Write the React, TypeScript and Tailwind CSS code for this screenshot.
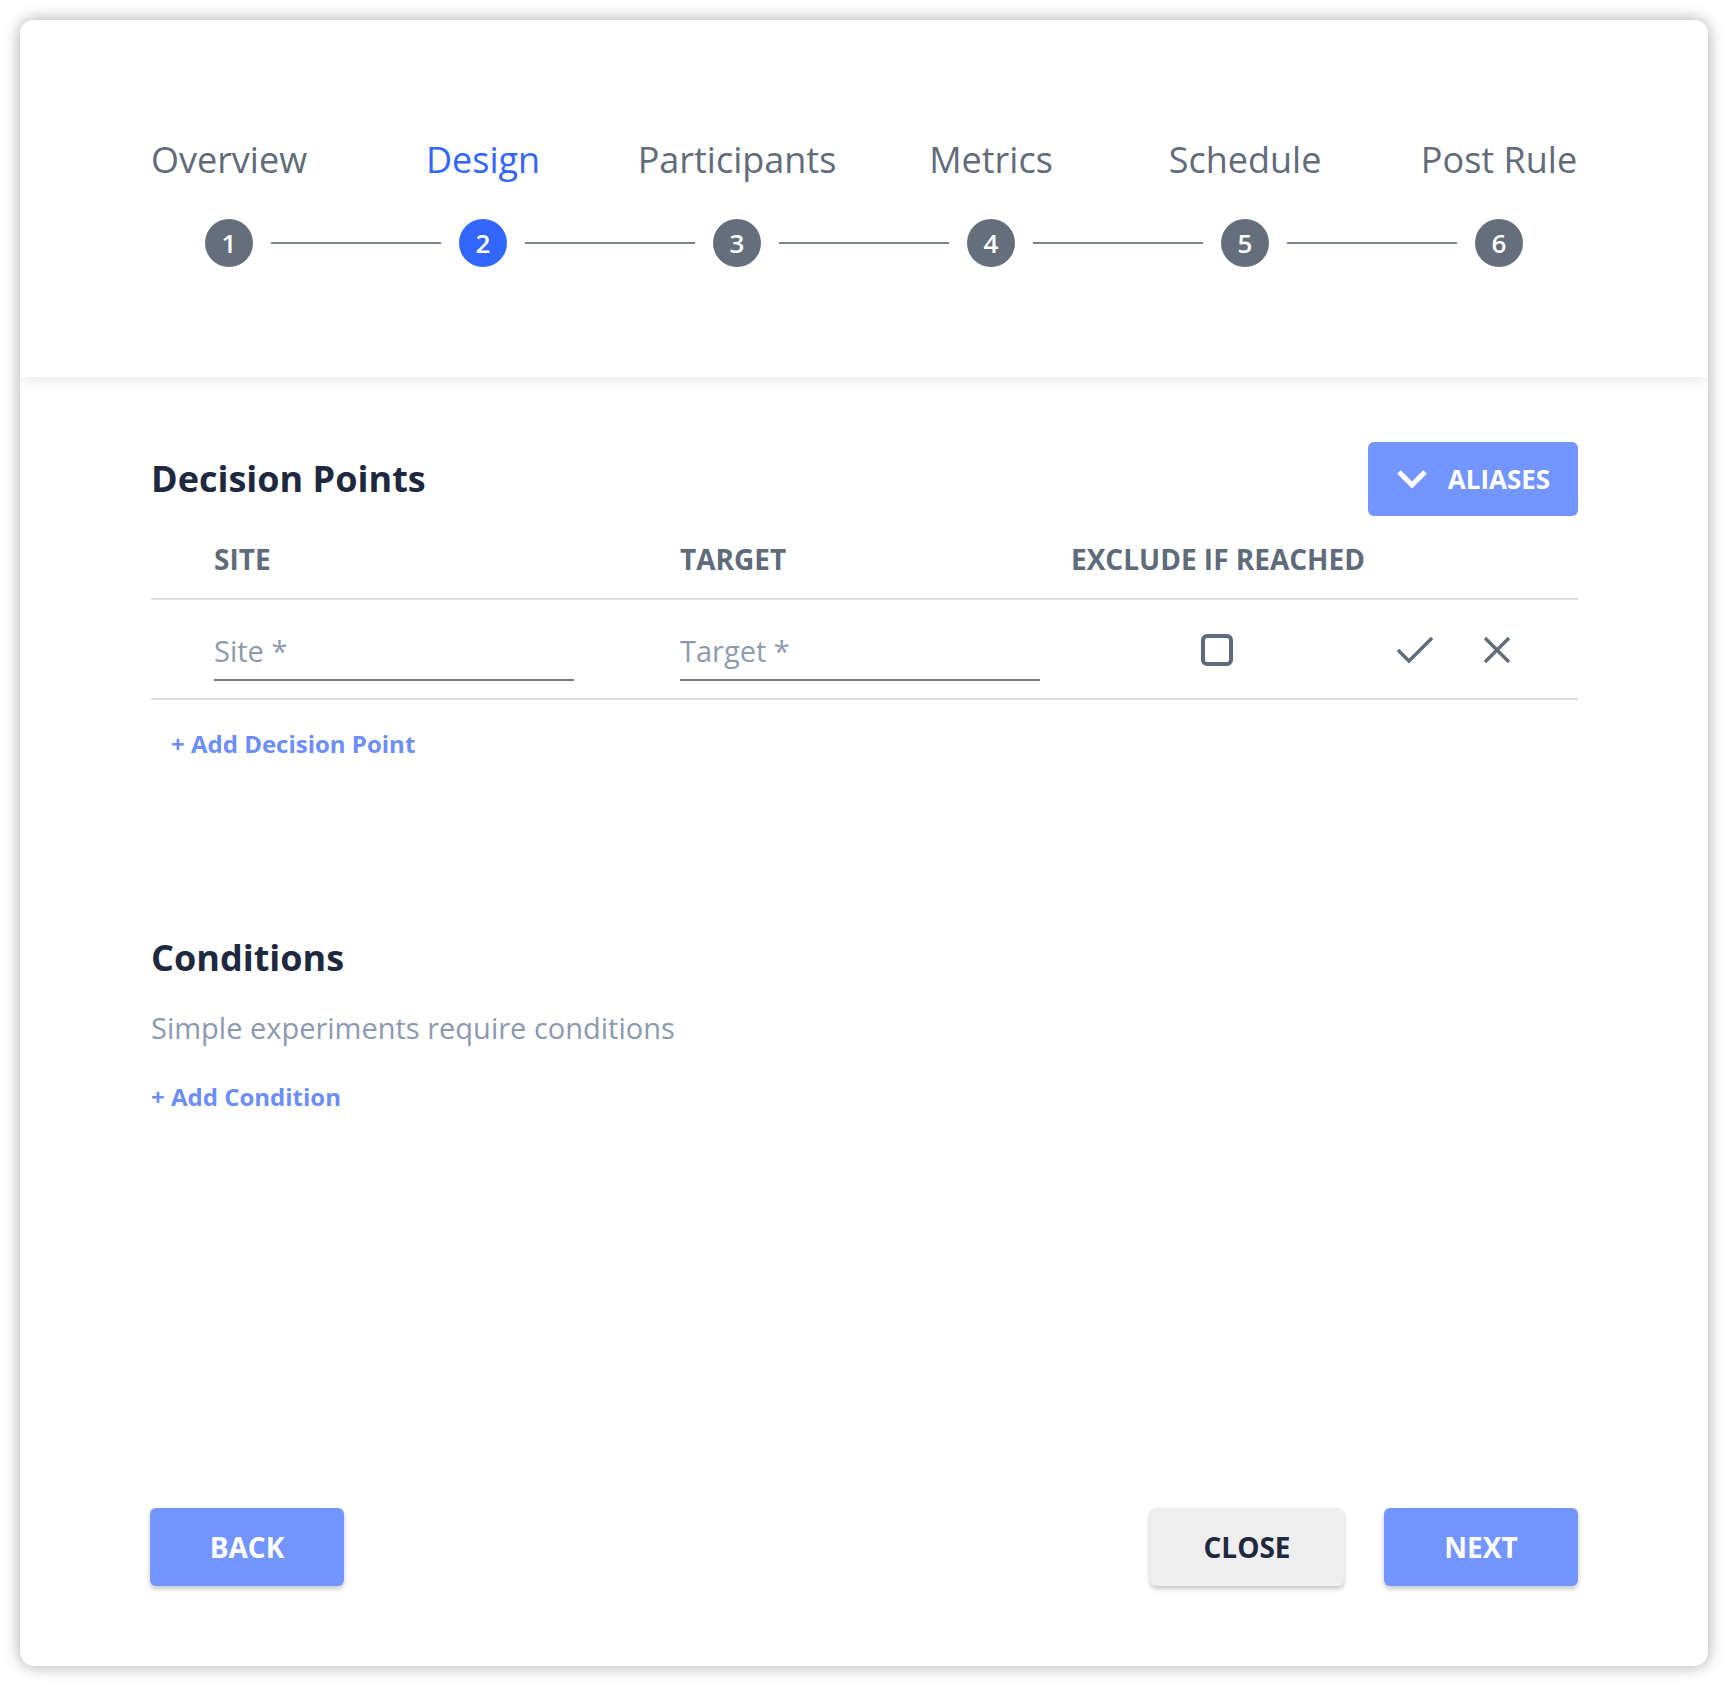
import React from 'react';

const steps = ['Overview', 'Design', 'Participants', 'Metrics', 'Schedule', 'Post Rule'];
const activeStep = 1;

function Stepper() {
  return (
    <div className="relative z-10 h-[357px] shrink-0 bg-white pt-[116px] shadow-[0_6px_14px_rgba(0,0,0,0.07)]">
      <div className="mx-auto grid w-[1524px] grid-cols-6">
        {steps.map((label, i) => (
          <div
            key={label}
            className={
              i === activeStep
                ? 'text-center text-[36px] leading-[48px] text-[#3366ff]'
                : 'text-center text-[36px] leading-[48px] text-[#616b79]'
            }
          >
            {label}
          </div>
        ))}
      </div>
      <div className="mx-auto mt-[35px] flex w-[1318px] items-center">
        {steps.map((label, i) => (
          <React.Fragment key={label}>
            {i > 0 && <div className="mx-[18px] h-[2px] flex-1 bg-[#7c8491]" />}
            <div
              className={
                i === activeStep
                  ? 'flex h-[48px] w-[48px] shrink-0 items-center justify-center rounded-full bg-[#3366ff] text-[26px] font-semibold text-white'
                  : 'flex h-[48px] w-[48px] shrink-0 items-center justify-center rounded-full bg-[#656e7b] text-[26px] font-semibold text-white'
              }
            >
              {i + 1}
            </div>
          </React.Fragment>
        ))}
      </div>
    </div>
  );
}

function ChevronDown() {
  return (
    <svg width="32" height="20" viewBox="0 0 32 20" fill="none">
      <polyline points="3,3 16,16 29,3" stroke="white" strokeWidth="5" />
    </svg>
  );
}

function CheckIcon() {
  return (
    <svg width="36" height="28" viewBox="0 0 36 28" fill="none">
      <polyline points="1,14 12,25 35,2" stroke="#636d7a" strokeWidth="3.4" />
    </svg>
  );
}

function CloseIcon() {
  return (
    <svg width="28" height="28" viewBox="0 0 28 28" fill="none">
      <path d="M2 2 L26 26 M26 2 L2 26" stroke="#636d7a" strokeWidth="3.4" />
    </svg>
  );
}

function TextField({ placeholder }: { placeholder: string }) {
  return (
    <div className="mt-[29px] w-[360px] self-start border-b-2 border-[#7b7b7b] pb-[8px]">
      <div className="text-[29px] leading-[40px] text-[#8e9ab0]">{placeholder}</div>
    </div>
  );
}

export default function App() {
  return (
    <div className="min-h-screen bg-white p-5 font-['Open_Sans',sans-serif]">
      <div className="flex h-[1646px] flex-col overflow-hidden rounded-[14px] bg-white shadow-[0_0_16px_rgba(0,0,0,0.35)]">
        <Stepper />

        <div className="flex flex-1 flex-col pl-[131px] pr-[130px] pt-[65px] pb-[80px]">
          <div className="flex h-[74px] items-center justify-between">
            <h2 className="text-[36px] font-bold leading-[48px] text-[#1e2940]">Decision Points</h2>
            <button className="flex h-[74px] w-[210px] items-center justify-center gap-[20px] rounded-[6px] bg-[#7395ff] text-[26px] font-bold text-white">
              <ChevronDown />
              ALIASES
            </button>
          </div>

          <div className="flex h-[84px] items-center whitespace-nowrap border-b-2 border-[#e0e0e0] pt-[4px] text-[28px] font-bold text-[#5f6b7a]">
            <div className="w-[63px]" />
            <div className="w-[466px]">SITE</div>
            <div className="w-[391px]">TARGET</div>
            <div className="w-[292px]">EXCLUDE IF REACHED</div>
          </div>

          <div className="flex h-[100px] items-center border-b-2 border-[#e0e0e0] pt-[2px]">
            <div className="w-[63px]" />
            <div className="flex w-[466px] self-stretch">
              <TextField placeholder="Site *" />
            </div>
            <div className="flex w-[391px] self-stretch">
              <TextField placeholder="Target *" />
            </div>
            <div className="flex w-[292px] justify-center">
              <div className="h-[32px] w-[32px] rounded-[6px] border-[4px] border-[#5f6b7a]" />
            </div>
            <div className="ml-[34px] flex items-center">
              <CheckIcon />
            </div>
            <div className="ml-[50px] flex items-center">
              <CloseIcon />
            </div>
          </div>

          <div className="mt-[28px] pl-[20px] text-[24px] font-bold leading-[32px] text-[#6d8dfb]">
            + Add Decision Point
          </div>

          <h2 className="mt-[174px] text-[36px] font-bold leading-[48px] text-[#1e2940]">Conditions</h2>
          <p className="mt-[26px] text-[29px] leading-[40px] text-[#8d99b0]">Simple experiments require conditions</p>
          <div className="mt-[33px] text-[24px] font-bold leading-[32px] text-[#6d8dfb]">+ Add Condition</div>

          <div className="mt-auto flex items-center">
            <button className="-ml-px h-[78px] w-[194px] rounded-[6px] bg-[#7395ff] text-[28px] font-bold text-white shadow-[0_3px_5px_rgba(0,0,0,0.22)]">
              BACK
            </button>
            <div className="flex-1" />
            <button className="h-[78px] w-[194px] rounded-[6px] bg-[#eeeeee] text-[28px] font-bold text-[#1e2940] shadow-[0_3px_5px_rgba(0,0,0,0.22)]">
              CLOSE
            </button>
            <button className="ml-[40px] h-[78px] w-[194px] rounded-[6px] bg-[#7395ff] text-[28px] font-bold text-white shadow-[0_3px_5px_rgba(0,0,0,0.22)]">
              NEXT
            </button>
          </div>
        </div>
      </div>
    </div>
  );
}
